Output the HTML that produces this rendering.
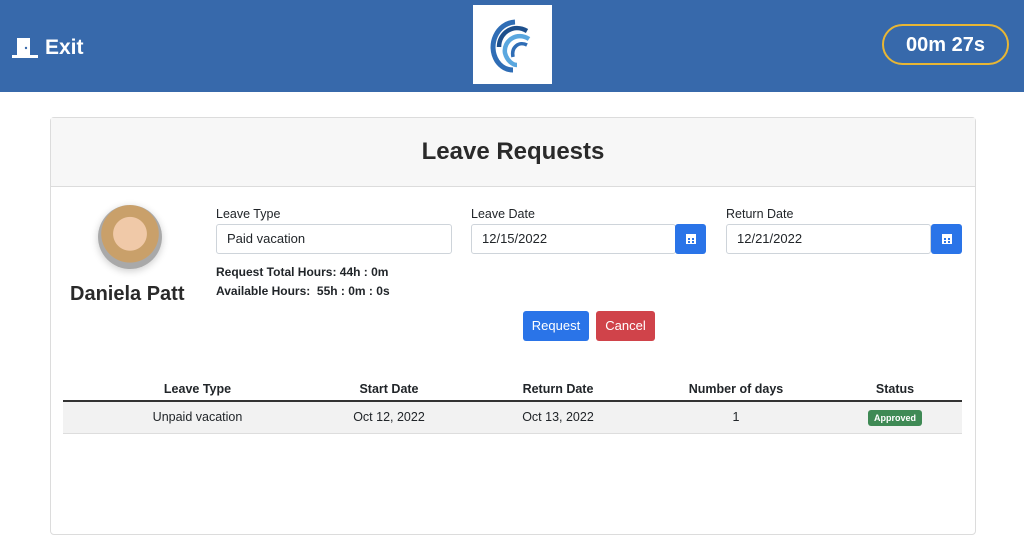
<!DOCTYPE html>
<html><head><style>
body{margin:0;width:1024px;height:556px;background:#fff;font-family:"Liberation Sans",sans-serif;color:#212529;position:relative;overflow:hidden}
.hdr{position:absolute;left:0;top:0;width:1024px;height:92px;background:#3769ab}
.abs{position:absolute}
.card{position:absolute;left:50px;top:117px;width:924px;height:416px;border:1px solid #dcdcdc;border-radius:4px;background:#fff}
.ch{height:68px;background:#f7f7f7;border-bottom:1px solid #dcdcdc;text-align:center;line-height:68px;font-size:24px;font-weight:bold;color:#2a2a2a}
.lbl{font-size:12.5px}
.inp{position:absolute;height:28px;border:1px solid #ced4da;border-radius:3px;box-sizing:border-box;font-size:13px;line-height:26px;padding-left:10px;background:#fff}
.cal{position:absolute;width:31px;height:30px;background:#2a74e8;border-radius:3px}
.th{position:absolute;top:382px;font-size:12.5px;font-weight:bold;text-align:center}
.td{position:absolute;top:410px;font-size:12.5px;text-align:center}
</style></head><body>
<div class="hdr"></div>
<svg class="abs" style="left:12px;top:38px" width="26" height="21"><rect x="5" y="0" width="13" height="17" fill="#fff"/><rect x="0" y="17" width="26" height="3" fill="#fff"/><circle cx="14" cy="10" r="1.2" fill="#3769ab"/></svg>
<div class="abs" style="left:45px;top:36px;color:#fff;font-size:21px;font-weight:bold">Exit</div>
<div class="abs" style="left:473px;top:5px;width:79px;height:79px;background:#fff"></div>
<svg class="abs" style="left:483px;top:15px" width="60" height="60"><path d="M32 7 C14 8 4 30 14 46 C18 52 24 55 30 55" stroke="#2f6db5" stroke-width="5" fill="none"/><path d="M44 16 C30 8 16 18 16 32" stroke="#1d4f8c" stroke-width="4.5" fill="none"/><path d="M46 24 C34 16 20 26 22 38 C24 46 30 50 34 50" stroke="#5aa7df" stroke-width="4.5" fill="none"/><path d="M44 30 C36 26 28 32 30 42" stroke="#2f6db5" stroke-width="3.5" fill="none"/></svg>
<div class="abs" style="left:882px;top:24px;width:127px;height:41px;border:2px solid #e8b634;border-radius:21px;box-sizing:border-box;color:#fff;font-size:20px;font-weight:bold;text-align:center;line-height:38px">00m 27s</div>
<div class="card"><div class="ch">Leave Requests</div></div>
<div class="abs" style="left:98px;top:205px;width:64px;height:64px;border-radius:50%;background:radial-gradient(circle at 50% 45%,#f0c9a8 0 35%,#c9a06a 36% 60%,#a9a9a9 61%);box-shadow:0 2px 8px rgba(0,0,0,.2)"></div>
<div class="abs" style="left:70px;top:283px;font-size:20px;font-weight:bold;color:#2a2a2a">Daniela Patt</div>
<div class="abs lbl" style="left:216px;top:207px">Leave Type</div>
<div class="inp" style="left:216px;top:224px;width:236px;height:30px;line-height:28px">Paid vacation</div>
<div class="abs" style="left:216px;top:263px;font-size:12px;font-weight:bold;line-height:19px">Request Total Hours: 44h : 0m<br>Available Hours:&nbsp; 55h : 0m : 0s</div>
<div class="abs lbl" style="left:471px;top:207px">Leave Date</div>
<div class="inp" style="left:471px;top:224px;width:205px;height:30px;line-height:28px">12/15/2022</div>
<div class="cal" style="left:675px;top:224px"></div>
<div class="abs lbl" style="left:726px;top:207px">Return Date</div>
<div class="inp" style="left:726px;top:224px;width:205px;height:30px;line-height:28px">12/21/2022</div>
<div class="cal" style="left:931px;top:224px"></div>
<svg class="abs" style="left:685px;top:232px" width="12" height="13"><rect x="1" y="2" width="10" height="10" fill="#fff"/><g fill="#2a74e8"><rect x="3" y="6" width="2" height="2"/><rect x="7" y="6" width="2" height="2"/><rect x="3" y="9" width="2" height="2"/><rect x="7" y="9" width="2" height="2"/></g></svg>
<svg class="abs" style="left:941px;top:232px" width="12" height="13"><rect x="1" y="2" width="10" height="10" fill="#fff"/><g fill="#2a74e8"><rect x="3" y="6" width="2" height="2"/><rect x="7" y="6" width="2" height="2"/><rect x="3" y="9" width="2" height="2"/><rect x="7" y="9" width="2" height="2"/></g></svg>
<div class="abs" style="left:523px;top:311px;width:66px;height:30px;background:#2a74e8;border-radius:3px;color:#fff;font-size:13px;text-align:center;line-height:30px">Request</div>
<div class="abs" style="left:596px;top:311px;width:59px;height:30px;background:#d0434a;border-radius:3px;color:#fff;font-size:13px;text-align:center;line-height:30px">Cancel</div>
<div class="th" style="left:130px;width:135px">Leave Type</div>
<div class="th" style="left:325px;width:128px">Start Date</div>
<div class="th" style="left:494px;width:128px">Return Date</div>
<div class="th" style="left:672px;width:128px">Number of days</div>
<div class="th" style="left:845px;width:100px">Status</div>
<div class="abs" style="left:63px;top:400px;width:899px;height:2px;background:#333"></div>
<div class="abs" style="left:63px;top:402px;width:899px;height:31px;background:#f2f2f2;border-bottom:1px solid #ddd"></div>
<div class="td" style="left:130px;width:135px">Unpaid vacation</div>
<div class="td" style="left:325px;width:128px">Oct 12, 2022</div>
<div class="td" style="left:494px;width:128px">Oct 13, 2022</div>
<div class="td" style="left:672px;width:128px">1</div>
<div class="abs" style="left:868px;top:410px;width:54px;height:16px;background:#3f8a55;border-radius:3px;color:#fff;font-size:9px;font-weight:bold;text-align:center;line-height:16px">Approved</div>
</body></html>
